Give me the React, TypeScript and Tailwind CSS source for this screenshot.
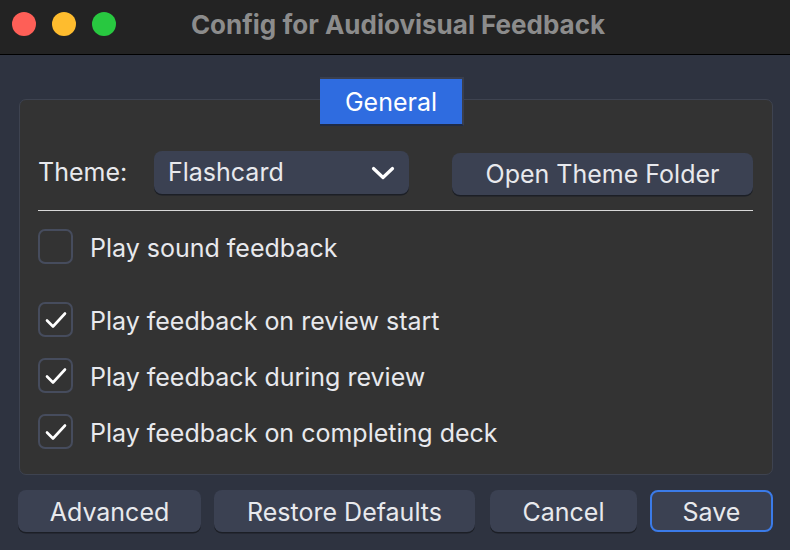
import React from "react";

const font = { fontFamily: "Inter, 'Noto Sans', sans-serif" };

function Check({ checked }: { checked: boolean }) {
  return (
    <div className="w-[35px] h-[35px] rounded-[7px] border-2 border-[#464c5d] flex items-center justify-center shrink-0">
      {checked && (
        <svg width="22" height="18" viewBox="0 0 22 18" fill="none">
          <path d="M2 9.5 L8 15.5 L20 2.5" stroke="white" strokeWidth="2.6" strokeLinecap="round" strokeLinejoin="round" />
        </svg>
      )}
    </div>
  );
}

function Row({ checked, label, className }: { checked: boolean; label: string; className: string }) {
  return (
    <div className={"flex items-center h-[35px] " + className}>
      <Check checked={checked} />
      <span className="ml-[17px] pt-[4px] text-[25px] text-[#e8e9ed] leading-none">{label}</span>
    </div>
  );
}

function Btn({ label, className }: { label: string; className: string }) {
  return (
    <div
      className={
        "h-[42px] rounded-[8px] bg-[#3b4152] shadow-[0_1.5px_0_#1c1f26] flex items-center justify-center pt-[3px] text-[25px] text-[#e8e9ed] " +
        className
      }
    >
      {label}
    </div>
  );
}

export default function App() {
  return (
    <div className="w-[790px] h-[550px] bg-[#2e3340] flex flex-col overflow-hidden" style={font}>
      <div className="h-[55px] bg-[#232323] border-b border-black flex items-center relative shrink-0">
        <div className="flex items-center gap-[16px] pl-[12px] -mt-[7px]">
          <div className="w-[24px] h-[24px] rounded-full bg-[#fe5f57]" />
          <div className="w-[24px] h-[24px] rounded-full bg-[#febc2e]" />
          <div className="w-[24px] h-[24px] rounded-full bg-[#28c840]" />
        </div>
        <div className="absolute left-0 right-0 top-[9px] text-center font-bold text-[26px] text-[#8c8c8c] leading-[32px] pl-[6px]">
          Config for Audiovisual Feedback
        </div>
      </div>

      <div className="pl-[19px] pr-[17px] flex flex-col">
        <div className="flex justify-center mt-[22px] relative z-10 pr-[8px]">
          <div className="w-[144px] h-[49px] bg-[#2f6ce0] border-r-2 border-t-2 border-[#3a3f4d] border-b-2 border-b-[#1f2b45] flex items-center justify-center pt-[3px] text-white text-[25px]">
            General
          </div>
        </div>
        <div className="-mt-[27px] h-[376px] bg-[#333333] border border-[#3e4350] rounded-[7px] pt-[51px] px-[18px] flex flex-col">
          <div className="flex items-center h-[43px]">
            <span className="text-[25px] text-[#e8e9ed] w-[116px]">Theme:</span>
            <div className="w-[255px] h-[43px] rounded-[8px] bg-[#3b4152] shadow-[0_1.5px_0_#1c1f26] flex items-center justify-between pl-[14px] pr-[14px]">
              <span className="text-[25px] text-[#e8e9ed]">Flashcard</span>
              <svg width="24" height="16" viewBox="0 0 24 16" fill="none">
                <path d="M2.5 3.5 L12 12.5 L21.5 3.5" stroke="white" strokeWidth="3.2" strokeLinecap="round" strokeLinejoin="round" />
              </svg>
            </div>
            <Btn label="Open Theme Folder" className="ml-[43px] w-[301px] mt-[2px]" />
          </div>
          <div className="h-px bg-[#d8d8d8] mt-[16px] w-[715px]" />
          <Row checked={false} label="Play sound feedback" className="mt-[18px]" />
          <Row checked={true} label="Play feedback on review start" className="mt-[38px]" />
          <Row checked={true} label="Play feedback during review" className="mt-[21px]" />
          <Row checked={true} label="Play feedback on completing deck" className="mt-[21px]" />
        </div>
        <div className="flex mt-[15px] -ml-[1px]">
          <Btn label="Advanced" className="w-[183px]" />
          <Btn label="Restore Defaults" className="w-[261px] ml-[13px]" />
          <Btn label="Cancel" className="w-[147px] ml-[15px]" />
          <Btn label="Save" className="w-[123px] ml-[13px] border-2 border-[#3b7be8] shadow-none" />
        </div>
      </div>
    </div>
  );
}
